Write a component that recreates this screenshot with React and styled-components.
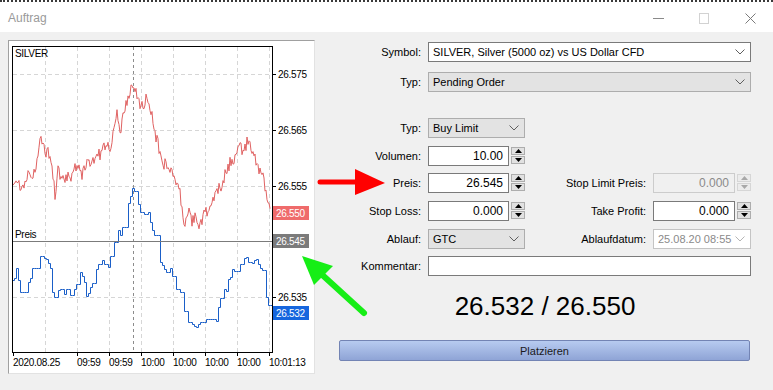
import React from 'react';
import styled, { createGlobalStyle } from 'styled-components';

const GlobalStyle = createGlobalStyle`
    html, body {
        margin: 0;
        padding: 0;
        background: #f0f0f0;
    }
    body {
        font-family: 'Liberation Sans', Arial, sans-serif;
        font-size: 11px;
        color: #000;
    }
    #root {
        width: 773px;
        height: 390px;
        overflow: hidden;
    }
`;

// chart data: rough key points of ask (red) and bid (blue), page coords
const ASK = [
    [13, 185], [17, 178], [20, 190], [25, 182], [28, 175], [32, 180], [36, 168],
    [40, 135], [44, 150], [48, 152], [52, 165], [55, 195], [58, 172], [62, 178],
    [66, 180], [72, 174], [78, 165], [82, 175], [88, 162], [94, 158], [100, 155],
    [106, 145], [110, 150], [113, 130], [117, 115], [121, 130], [125, 105],
    [129, 95], [133, 86], [136, 92], [140, 108], [144, 103], [148, 98],
    [152, 118], [155, 135], [160, 150], [164, 163], [170, 172], [176, 182],
    [180, 190], [184, 228], [188, 212], [192, 222], [196, 215], [200, 228],
    [204, 215], [208, 210], [212, 200], [218, 192], [224, 178], [230, 162],
    [236, 155], [240, 148], [244, 150], [248, 140], [252, 155], [256, 160],
    [260, 170], [264, 178], [267, 200], [270, 212],
];

const BID = [
    [13, 280], [16, 270], [19, 290], [26, 290], [30, 275], [33, 262], [38, 258],
    [43, 253], [47, 262], [50, 270], [53, 300], [57, 288], [62, 292], [67, 290],
    [72, 295], [76, 285], [80, 270], [84, 285], [87, 297], [90, 285], [93, 277],
    [97, 268], [100, 263], [104, 262], [108, 268], [111, 252], [114, 240],
    [117, 227], [120, 238], [124, 210], [128, 203], [131, 195], [133, 186],
    [136, 198], [139, 210], [142, 213], [148, 213], [151, 225], [153, 233],
    [157, 232], [159, 250], [161, 268], [170, 270], [173, 282], [177, 290],
    [182, 292], [184, 310], [185, 333], [188, 325], [190, 320], [194, 326],
    [197, 327], [200, 322], [203, 320], [210, 320], [217, 317], [220, 297],
    [225, 290], [230, 277], [235, 265], [240, 262], [243, 257], [248, 262],
    [258, 262], [262, 270], [265, 293], [268, 305], [272, 313],
];

const rng = (seed) => () => {
    seed = (seed + 0x6d2b79f5) | 0;
    let t = Math.imul(seed ^ (seed >>> 15), 1 | seed);
    t = (t + Math.imul(t ^ (t >>> 7), 61 | t)) ^ t;
    return ((t ^ (t >>> 14)) >>> 0) / 4294967296;
};

const interp = (keys, x) => {
    for (let i = 1; i < keys.length; i++) {
        const [x0, y0] = keys[i - 1];
        const [x1, y1] = keys[i];
        if (x <= x1) return y0 + ((y1 - y0) * (x - x0)) / (x1 - x0);
    }
    return keys[keys.length - 1][1];
};

const buildAsk = () => {
    const r = rng(11);
    let d = '';
    for (let x = 13; x <= 270; x++) {
        const y = interp(ASK, x) + (r() - 0.5) * 13;
        d += `${x === 13 ? 'M' : 'L'}${x} ${y.toFixed(1)} `;
    }
    return d;
};

const buildBid = () => {
    const r = rng(5);
    let prev = Math.round(interp(BID, 13)) + 0.5;
    let d = `M13 ${prev}`;
    for (let x = 14; x <= 272; x += 2) {
        let y = Math.round(interp(BID, x) + (r() - 0.5) * 7) + 0.5;
        if (r() < 0.25) y = prev;
        d += ` H${x + 0.5} V${y}`;
        prev = y;
    }
    return d;
};

const ASK_PATH = buildAsk();
const BID_PATH = buildBid();

const GRID_X = [45, 77, 109, 141, 173, 205, 237, 269];
const GRID_Y = [74, 130, 186, 297];
const PRICE_LABELS = [
    ['26.575', 74],
    ['26.565', 130],
    ['26.555', 186],
    ['26.535', 297],
];
const TIME_LABELS = [
    ['2020.08.25', 13],
    ['09:59', 77],
    ['09:59', 109],
    ['10:00', 141],
    ['10:00', 173],
    ['10:00', 205],
    ['10:00', 237],
    ['10:01:13', 269],
];
const TAGS = [
    ['26.550', 213, '#ef6b6b'],
    ['26.545', 241, '#7b7b7b'],
    ['26.532', 313, '#1666de'],
];

const Window = styled.div`
    position: relative;
    width: 773px;
    height: 390px;
    display: flex;
    flex-direction: column;
    background: #f0f0f0;
    overflow: hidden;
`;

const TitleBar = styled.div`
    height: 32px;
    box-sizing: border-box;
    background: #ffffff;
    border-top: 2px dotted #3a3a3a;
    display: flex;
    align-items: center;
    padding-left: 8px;
`;

const Title = styled.span`
    font-size: 12px;
    color: #9a9a9a;
    margin-top: 2px;
`;

const WinButtons = styled.div`
    margin-left: auto;
    display: flex;
    height: 100%;
`;

const WinButton = styled.div`
    width: 46px;
    display: flex;
    align-items: center;
    justify-content: center;
    padding-top: 2px;
`;

const Body = styled.div`
    flex: 1;
    display: flex;
    padding: 8px 0 0 8px;
`;

const ChartPanel = styled.div`
    width: 307px;
    height: 334px;
    box-sizing: border-box;
    background: #ffffff;
    border: 1px solid #e2e2e2;
    border-left-color: #a0a0a0;
    border-top-color: #a0a0a0;
`;

const ChartSvg = styled.svg`
    display: block;
    text {
        font-family: 'Liberation Sans', Arial, sans-serif;
        font-size: 10px;
        letter-spacing: -0.3px;
        fill: #000;
    }
`;

const FormColumn = styled.div`
    width: 412px;
    margin-left: 24px;
    padding-top: 2px;
    display: flex;
    flex-direction: column;
`;

const TopGrid = styled.div`
    display: grid;
    grid-template-columns: 82px 1fr;
    grid-auto-rows: 20px;
    column-gap: 7px;
    row-gap: 10px;
`;

const OrderGrid = styled.div`
    display: grid;
    grid-template-columns: 82px 97px 114px 98px;
    grid-auto-rows: 20px;
    column-gap: 7px;
    row-gap: 7.7px;
    margin-top: 26px;
`;

const Label = styled.div`
    text-align: right;
    line-height: 20px;
    white-space: nowrap;
    color: #000;
`;

const Select = styled.div`
    height: 20px;
    box-sizing: border-box;
    display: flex;
    align-items: center;
    padding: 0 5px 0 4px;
    border: 1px solid
        ${(p) =>
            p.$variant === 'white' ? '#7a7a7a' : p.$variant === 'disabled' ? '#c4c4c4' : '#adadad'};
    background: ${(p) => (p.$variant === 'grey' ? '#e3e3e3' : '#ffffff')};
    color: ${(p) => (p.$variant === 'disabled' ? '#8a8a8a' : '#000')};
    span {
        flex: 1;
        white-space: nowrap;
        overflow: hidden;
    }
`;

const SpinField = styled.div`
    display: flex;
    gap: 2px;
`;

const Input = styled.div`
    flex: 1;
    height: 20px;
    box-sizing: border-box;
    border: 1px solid ${(p) => (p.$disabled ? '#cccccc' : '#7a7a7a')};
    background: ${(p) => (p.$disabled ? '#f0f0f0' : '#ffffff')};
    color: ${(p) => (p.$disabled ? '#8a8a8a' : '#000')};
    display: flex;
    align-items: center;
    justify-content: flex-end;
    padding: 0 5px;
    font-size: 12px;
    grid-column: ${(p) => p.$span || 'auto'};
`;

const Spinner = styled.div`
    width: 14px;
    display: flex;
    flex-direction: column;
    gap: 1px;
    padding-top: 1px;
`;

const SpinButton = styled.div`
    height: 8px;
    box-sizing: border-box;
    border: 1px solid ${(p) => (p.$disabled ? '#d6d6d6' : '#adadad')};
    background: ${(p) => (p.$disabled ? '#ececec' : '#e1e1e1')};
    display: flex;
    align-items: center;
    justify-content: center;
    svg {
        fill: ${(p) => (p.$disabled ? '#a8a8a8' : '#000')};
    }
`;

const BigPrice = styled.div`
    margin-top: 15px;
    text-align: center;
    font-size: 26px;
    line-height: 30px;
    color: #000;
`;

const PlaceButton = styled.button`
    margin-top: 19px;
    width: 411px;
    height: 21px;
    padding: 0;
    border: 1px solid #7384b4;
    border-radius: 2px;
    background: linear-gradient(#b7cbf0, #8fa4d6);
    font-family: 'Liberation Sans', Arial, sans-serif;
    font-size: 11px;
    color: #1a1a1a;
`;

const Annotations = styled.svg`
    position: absolute;
    left: 0;
    top: 0;
    pointer-events: none;
`;

const Chevron = ({ color = '#5f5f5f' }) => (
    <svg width="10" height="6" viewBox="0 0 10 6">
        <path d="M0.5 0.5 L5 5 L9.5 0.5" fill="none" stroke={color} strokeWidth="1" />
    </svg>
);

const Spin = ({ disabled }) => (
    <Spinner>
        <SpinButton $disabled={disabled}>
            <svg width="7" height="4" viewBox="0 0 7 4">
                <path d="M0 4 L3.5 0 L7 4 Z" />
            </svg>
        </SpinButton>
        <SpinButton $disabled={disabled}>
            <svg width="7" height="4" viewBox="0 0 7 4">
                <path d="M0 0 L3.5 4 L7 0 Z" />
            </svg>
        </SpinButton>
    </Spinner>
);

const NumberField = ({ value, disabled }) => (
    <SpinField>
        <Input $disabled={disabled}>{value}</Input>
        <Spin disabled={disabled} />
    </SpinField>
);

const SelectField = ({ value, variant = 'grey' }) => (
    <Select $variant={variant}>
        <span>{value}</span>
        <Chevron color={variant === 'disabled' ? '#b5b5b5' : '#5f5f5f'} />
    </Select>
);

const Chart = () => (
    <ChartSvg width="305" height="332" viewBox="9 41 305 332">
        <defs>
            <clipPath id="plot">
                <rect x="13" y="47" width="259" height="305" />
            </clipPath>
        </defs>
        {GRID_X.map((x) => (
            <line key={`gx${x}`} x1={x + 0.5} y1="47" x2={x + 0.5} y2="352" stroke="#d6d6d6" strokeDasharray="4 3" />
        ))}
        {GRID_Y.map((y) => (
            <line key={`gy${y}`} x1="13" y1={y + 0.5} x2="272" y2={y + 0.5} stroke="#d6d6d6" strokeDasharray="4 3" />
        ))}
        <line x1="133.5" y1="47" x2="133.5" y2="352" stroke="#8c8c8c" strokeDasharray="3 3" />
        <g clipPath="url(#plot)">
            <path d={ASK_PATH} fill="none" stroke="#e06262" strokeWidth="1" />
            <path d={BID_PATH} fill="none" stroke="#1a5fc8" strokeWidth="1" />
        </g>
        <line x1="13" y1="241.5" x2="274" y2="241.5" stroke="#7b7b7b" />
        <text x="15" y="238">Preis</text>
        <text x="15" y="57">SILVER</text>
        <rect x="12.5" y="46.5" width="260" height="306" fill="none" stroke="#000" />
        {PRICE_LABELS.map(([t, y]) => (
            <g key={t}>
                <line x1="272" y1={y + 0.5} x2="276" y2={y + 0.5} stroke="#000" />
                <text x="278" y={y + 4}>{t}</text>
            </g>
        ))}
        {TAGS.map(([t, y, c]) => (
            <g key={t}>
                <rect x="273" y={y - 7} width="36" height="14" fill={c} />
                <text x="276" y={y + 4} style={{ fill: '#fff' }}>{t}</text>
            </g>
        ))}
        {TIME_LABELS.map(([t, x], i) => (
            <g key={`t${i}`}>
                <line x1={x + 0.5} y1="352" x2={x + 0.5} y2="356" stroke="#000" />
                <text x={x} y="366">{t}</text>
            </g>
        ))}
    </ChartSvg>
);

const App = () => {
    return (
        <>
            <GlobalStyle />
            <Window>
                <TitleBar>
                    <Title>Auftrag</Title>
                    <WinButtons>
                        <WinButton>
                            <svg width="11" height="10" viewBox="0 0 11 10">
                                <line x1="0" y1="5.5" x2="11" y2="5.5" stroke="#8a8a8a" />
                            </svg>
                        </WinButton>
                        <WinButton>
                            <svg width="11" height="11" viewBox="0 0 11 11">
                                <rect x="0.5" y="0.5" width="9" height="10" fill="none" stroke="#d2d2d2" />
                            </svg>
                        </WinButton>
                        <WinButton>
                            <svg width="11" height="11" viewBox="0 0 11 11">
                                <path d="M0.5 0.5 L10.5 10.5 M10.5 0.5 L0.5 10.5" stroke="#7a7a7a" />
                            </svg>
                        </WinButton>
                    </WinButtons>
                </TitleBar>
                <Body>
                    <ChartPanel>
                        <Chart />
                    </ChartPanel>
                    <FormColumn>
                        <TopGrid>
                            <Label>Symbol:</Label>
                            <SelectField value="SILVER, Silver (5000 oz) vs US Dollar CFD" variant="white" />
                            <Label>Typ:</Label>
                            <SelectField value="Pending Order" />
                        </TopGrid>
                        <OrderGrid>
                            <Label>Typ:</Label>
                            <SelectField value="Buy Limit" />
                            <div />
                            <div />

                            <Label>Volumen:</Label>
                            <NumberField value="10.00" />
                            <div />
                            <div />

                            <Label>Preis:</Label>
                            <NumberField value="26.545" />
                            <Label>Stop Limit Preis:</Label>
                            <NumberField value="0.000" disabled />

                            <Label>Stop Loss:</Label>
                            <NumberField value="0.000" />
                            <Label>Take Profit:</Label>
                            <NumberField value="0.000" />

                            <Label>Ablauf:</Label>
                            <SelectField value="GTC" />
                            <Label>Ablaufdatum:</Label>
                            <SelectField value="25.08.20 08:55" variant="disabled" />

                            <Label>Kommentar:</Label>
                            <Input $span="2 / 5" />
                        </OrderGrid>
                        <BigPrice>26.532 / 26.550</BigPrice>
                        <PlaceButton>Platzieren</PlaceButton>
                    </FormColumn>
                </Body>
                <Annotations width="773" height="390" viewBox="0 0 773 390">
                    <line x1="320" y1="182" x2="358" y2="182" stroke="#ff0000" strokeWidth="5" strokeLinecap="round" />
                    <polygon points="355,169 385,183 355,195" fill="#ff0000" />
                    <line x1="318" y1="271" x2="364" y2="313" stroke="#16ee16" strokeWidth="6" strokeLinecap="round" />
                    <polygon points="302,256 333,266 314,285" fill="#16ee16" />
                </Annotations>
            </Window>
        </>
    );
};

export default App;
